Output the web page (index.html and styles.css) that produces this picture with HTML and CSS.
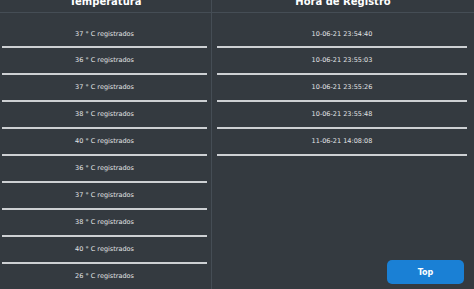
FILE: index.html
```html
<!DOCTYPE html>
<html>
<head>
<title>Registros</title>
<link rel="stylesheet" href="styles.css">
</head>
<body>

<div class="registros">
	<div class="columna col_temp">
		<div class="cabecera">Temperatura</div>
		<div class="celda">37 ° C registrados</div>
		<div class="celda">36 ° C registrados</div>
		<div class="celda">37 ° C registrados</div>
		<div class="celda">38 ° C registrados</div>
		<div class="celda">40 ° C registrados</div>
		<div class="celda">36 ° C registrados</div>
		<div class="celda">37 ° C registrados</div>
		<div class="celda">38 ° C registrados</div>
		<div class="celda">40 ° C registrados</div>
		<div class="celda">26 ° C registrados</div>
	</div>
	<div class="columna col_hora">
		<div class="cabecera">Hora de Registro</div>
		<div class="celda">10-06-21 23:54:40</div>
		<div class="celda">10-06-21 23:55:03</div>
		<div class="celda">10-06-21 23:55:26</div>
		<div class="celda">10-06-21 23:55:48</div>
		<div class="celda">11-06-21 14:08:08</div>
	</div>
</div>

<button class="btn_top" id="btn_top" onclick="window.scrollTo(0,0)">Top</button>

</body>
</html>
```

FILE: styles.css
```css
	body
	{
		margin : 0;
		background-color : #343a40;
		font-family : "DejaVu Sans", sans-serif;
		color : #ffffff;
		overflow : hidden;
	}
	.registros
	{
		display : grid;
		grid-template-columns : 212px 1fr;
		margin-top : -14px; /* pagina desplazada */
		min-height : 320px;
	}
	.columna
	{
		display : flex;
		flex-direction : column;
	}
	.col_temp
	{
		border-right : 1px solid #454d55;
		padding : 0 4px 0 2px;
	}
	.col_hora
	{
		padding : 0 7px 0 5px;
	}
	.cabecera
	{
		height : 26px;
		line-height : 31px;
		text-align : center;
		font-size : 10px;
		font-weight : bold;
		margin : 0 -7px 0 -5px;
		border-bottom : 1px solid #454d55;
		overflow : hidden;
	}
	.col_temp .cabecera
	{
		margin : 0 -4px 0 -2px;
	}
	.celda
	{
		height : 25px;
		line-height : 25px;
		text-align : center;
		font-size : 6.5px;
		color : #e1e3e5;
		border-bottom : 2px solid #cdd0d3;
	}
	.celda:nth-child(2)
	{
		height : 33px;
		line-height : 42px;
	}
	.btn_top
	{
		position : fixed;
		right : 10px;
		bottom : 5px;
		width : 77px;
		height : 24px;
		border : 0;
		border-radius : 5px;
		background-color : #1a80d5;
		color : white;
		font-family : "DejaVu Sans", sans-serif;
		font-size : 8px;
		font-weight : bold;
	}
```
